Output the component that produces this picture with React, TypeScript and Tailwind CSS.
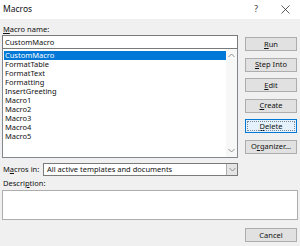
import React from 'react';

const macros = [
  'CustomMacro',
  'FormatTable',
  'FormatText',
  'Formatting',
  'InsertGreeting',
  'Macro1',
  'Macro2',
  'Macro3',
  'Macro4',
  'Macro5',
];

const Chevron: React.FC<{ up?: boolean }> = ({ up }) => (
  <svg width="7" height="5" viewBox="0 0 7 5" className="block">
    <path
      d={up ? 'M0.5 4L3.5 1L6.5 4' : 'M0.5 1L3.5 4L6.5 1'}
      fill="none"
      stroke="#909090"
      strokeWidth="1"
    />
  </svg>
);

const Btn: React.FC<{ label: string; u?: number; focused?: boolean }> = ({ label, u, focused }) => {
  const text =
    u === undefined ? (
      label
    ) : (
      <>
        {label.slice(0, u)}
        <span className="underline">{label[u]}</span>
        {label.slice(u + 1)}
      </>
    );
  return (
    <button
      className={`h-[14px] w-full flex items-center justify-center text-[7.5px] leading-[9px] ${
        focused
          ? 'border border-[#0078d7] bg-[#e5f1fb] outline-1 outline-dotted outline-[#7a8a99] -outline-offset-[3px]'
          : 'border border-[#adadad] bg-[#e1e1e1]'
      }`}
    >
      {text}
    </button>
  );
};

export default function App() {
  return (
    <div
      className="w-[300px] h-[246px] bg-[#f0f0f0] text-[#111] overflow-hidden"
      style={{ fontFamily: '"Noto Sans", "Open Sans", sans-serif' }}
    >
      {/* Title bar */}
      <div className="h-[19px] bg-white flex items-center justify-between pl-[3px] pr-[10px]">
        <span className="text-[8.5px]">Macros</span>
        <div className="flex items-center gap-[23px]">
          <span className="text-[8.5px] text-[#333]">?</span>
          <svg width="9" height="9" viewBox="0 0 9 9">
            <path d="M0.5 0.5L8.5 8.5M8.5 0.5L0.5 8.5" stroke="#333" strokeWidth="0.8" />
          </svg>
        </div>
      </div>

      <div className="px-[2px]">
        <div className="h-[16px] flex items-end pb-[1px] pl-[1px] text-[7.5px] leading-[9px]">
          <span>
            <span className="underline">M</span>acro name:
          </span>
        </div>

        <div className="flex gap-[7px]">
          {/* Left column */}
          <div className="w-[236px] flex flex-col">
            <div className="h-[14px] bg-white border border-[#7a7a7a] flex items-center px-[2px] text-[7.5px] leading-[9px]">
              CustomMacro
            </div>
            <div className="h-[109px] bg-white border border-[#828790] border-t-0 flex">
              <div className="flex-1 pt-[2px] pl-px">
                {macros.map((m, i) => (
                  <div
                    key={m}
                    className={`h-[9px] flex items-center px-px text-[7.5px] leading-[9px] ${
                      i === 0 ? 'bg-[#0078d7] text-white' : ''
                    }`}
                  >
                    {m}
                  </div>
                ))}
              </div>
              <div className="w-[11px] bg-[#f7f7f7] flex flex-col items-center justify-between py-[4px]">
                <Chevron up />
                <Chevron />
              </div>
            </div>
          </div>

          {/* Buttons */}
          <div className="w-[52px] flex flex-col gap-[6.5px] pt-[2px]">
            <Btn label="Run" u={0} />
            <Btn label="Step Into" u={0} />
            <Btn label="Edit" u={0} />
            <Btn label="Create" u={0} />
            <Btn label="Delete" u={0} focused />
            <Btn label="Organizer..." u={1} />
          </div>
        </div>

        {/* Macros in */}
        <div className="flex items-center mt-[5px] w-[236px]">
          <span className="w-[41px] pl-[1px] text-[7.5px] leading-[9px]">
            M<span className="underline">a</span>cros in:
          </span>
          <div className="flex-1 h-[13px] bg-white border border-[#7a7a7a] flex">
            <span className="flex-1 flex items-center px-[3px] text-[7.5px] leading-[9px]">
              All active templates and documents
            </span>
            <span className="w-[11px] bg-[#e5e5e5] border-l border-[#adadad] flex items-center justify-center">
              <Chevron />
            </span>
          </div>
        </div>

        <div className="h-[14px] flex items-center pl-[1px] text-[7.5px] leading-[9px]">
          <span>
            Descri<span className="underline">p</span>tion:
          </span>
        </div>
        <div className="h-[30px] bg-white border border-[#adadad]" />

        <div className="flex justify-end mt-[8px] pr-[1px]">
          <div className="w-[52px]">
            <Btn label="Cancel" />
          </div>
        </div>
      </div>
    </div>
  );
}
